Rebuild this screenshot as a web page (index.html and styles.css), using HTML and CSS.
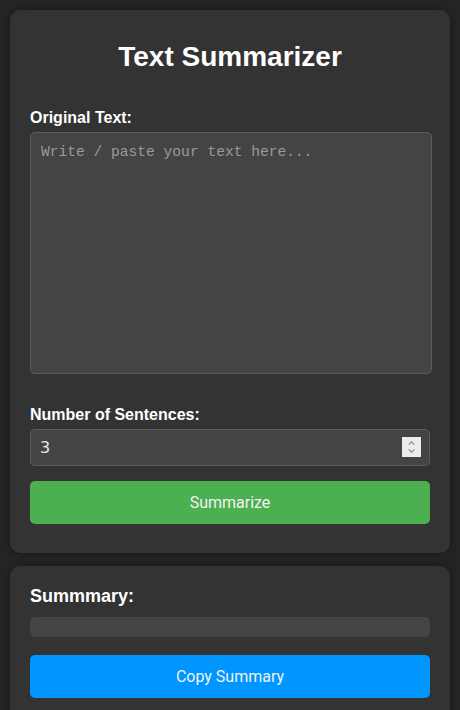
FILE: index.html
```html
<!DOCTYPE html>
<html lang="en">
<head>
<meta charset="utf-8">
<title>Text Summarizer</title>
<link rel="stylesheet" href="styles.css">
</head>
<body>
<main class="page">
  <section class="card">
    <h1 class="title">Text Summarizer</h1>
    <label class="label" for="text">Original Text:</label>
    <textarea id="text" class="textarea" placeholder="Write / paste your text here..."></textarea>
    <label class="label label-num" for="num">Number of Sentences:</label>
    <div class="num-wrap">
      <input id="num" class="num" type="number" value="3">
      <span class="spinner" aria-hidden="true">
        <svg width="20" height="20" viewBox="0 0 20 20"><path d="M7 7.5 L10 4.5 L13 7.5" fill="none" stroke="#8a8a8a" stroke-width="1.2"/><path d="M7 12.5 L10 15.5 L13 12.5" fill="none" stroke="#8a8a8a" stroke-width="1.2"/></svg>
      </span>
    </div>
    <button class="btn btn-green" type="button">Summarize</button>
  </section>
  <section class="card card-summary">
    <h2 class="sum-title">Summmary:</h2>
    <div class="sum-box"></div>
    <button class="btn btn-blue" type="button">Copy Summary</button>
  </section>
</main>
</body>
</html>
```
FILE: styles.css
```css
html { background: #242424; }
body {
  margin: 0;
  padding: 10px 10px 10px 10px;
  background: #242424;
  font-family: "Liberation Sans", Arial, sans-serif;
  color: #fff;
}
::-webkit-scrollbar { width: 6px; }
::-webkit-scrollbar-track { background: #2b2b2b; }
::-webkit-scrollbar-thumb { background: #6e6e6e; }
.page { display: flex; flex-direction: column; gap: 13px; }
.card {
  background: #333333;
  border-radius: 10px;
  padding: 20px 20px 29px;
  display: flex;
  flex-direction: column;
  box-shadow: 0 0 6px rgba(0,0,0,0.35);
}
.title {
  margin: 11px 0 35px;
  font-size: 28px;
  font-weight: bold;
  text-align: center;
  line-height: 32px;
}
.label {
  font-size: 16px;
  font-weight: bold;
  line-height: 18px;
  padding-top: 1px;
  margin-bottom: 5px;
}
.label-num { margin-top: 31px; margin-bottom: 5px; }
.textarea {
  box-sizing: border-box;
  width: calc(100% + 2px);
  height: 242px;
  background: #444;
  border: 1px solid #5c5c5c;
  border-radius: 5px;
  padding: 11px 10px 10px;
  color: #ddd;
  font-family: "Liberation Mono", "DejaVu Sans Mono", monospace;
  font-size: 14.6px;
  resize: none;
  outline: none;
}
.textarea::placeholder { color: #9a9a9a; }
.num-wrap { position: relative; }
.num {
  box-sizing: border-box;
  width: 100%;
  height: 37px;
  background: #444;
  border: 1px solid #5c5c5c;
  border-radius: 5px;
  padding: 0 9px;
  color: #e6e6e6;
  font-family: "DejaVu Sans", sans-serif;
  font-size: 16px;
  outline: none;
  -moz-appearance: textfield;
}
.num::-webkit-inner-spin-button,
.num::-webkit-outer-spin-button { -webkit-appearance: none; margin: 0; }
.spinner {
  position: absolute;
  right: 9px;
  top: 8px;
  width: 19px;
  height: 20px;
  background: #ececec;
  display: flex;
  align-items: center;
  justify-content: center;
}
.btn {
  border: none;
  border-radius: 5px;
  height: 43px;
  color: #f2f2f2;
  font-family: Roboto, "Liberation Sans", sans-serif;
  font-size: 16px;
  width: 100%;
}
.btn-green { background: #4caf50; margin-top: 15px; }
.card-summary { padding-top: 20px; }
.sum-title {
  margin: 0 0 10px;
  font-size: 18px;
  line-height: 21px;
  font-weight: bold;
}
.sum-box {
  height: 20px;
  background: #444;
  border-radius: 5px;
}
.btn-blue { background: #0096ff; margin-top: 18px; }
```
